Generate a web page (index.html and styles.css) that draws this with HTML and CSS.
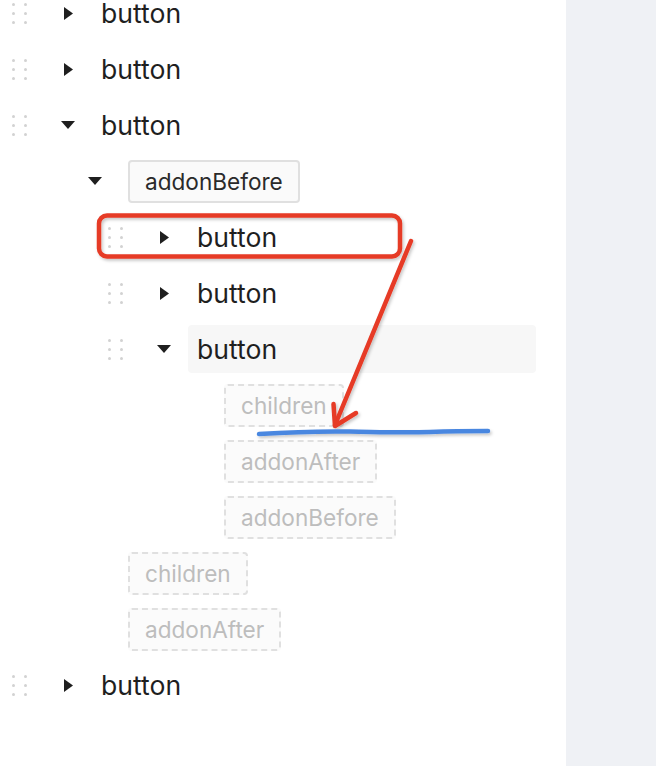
FILE: index.html
```html
<!DOCTYPE html>
<html>
<head>
<meta charset="utf-8">
<link rel="stylesheet" href="styles.css">
</head>
<body>
<div class="app">
  <div class="tree">
    <div class="node">
      <div class="row"><span class="handle"><i></i><i></i><i></i><i></i><i></i><i></i></span><span class="caret"><svg width="9" height="13" viewBox="0 0 9 13"><polygon points="0,0 9,6.5 0,13"/></svg></span><span class="label">button</span></div>
    </div>
    <div class="node">
      <div class="row"><span class="handle"><i></i><i></i><i></i><i></i><i></i><i></i></span><span class="caret"><svg width="9" height="13" viewBox="0 0 9 13"><polygon points="0,0 9,6.5 0,13"/></svg></span><span class="label">button</span></div>
    </div>
    <div class="node">
      <div class="row"><span class="handle"><i></i><i></i><i></i><i></i><i></i><i></i></span><span class="caret"><svg width="14" height="8" viewBox="0 0 14 8"><polygon points="0,0 14,0 7,8"/></svg></span><span class="label">button</span></div>
      <div class="slot">
        <div class="slot-row"><span class="caret"><svg width="14" height="8" viewBox="0 0 14 8"><polygon points="0,0 14,0 7,8"/></svg></span><span class="tag">addonBefore</span></div>
        <div class="slot-children">
          <div class="node">
            <div class="row"><span class="handle"><i></i><i></i><i></i><i></i><i></i><i></i></span><span class="caret"><svg width="9" height="13" viewBox="0 0 9 13"><polygon points="0,0 9,6.5 0,13"/></svg></span><span class="label">button</span></div>
          </div>
          <div class="node">
            <div class="row"><span class="handle"><i></i><i></i><i></i><i></i><i></i><i></i></span><span class="caret"><svg width="9" height="13" viewBox="0 0 9 13"><polygon points="0,0 9,6.5 0,13"/></svg></span><span class="label">button</span></div>
          </div>
          <div class="node">
            <div class="row"><span class="handle"><i></i><i></i><i></i><i></i><i></i><i></i></span><span class="caret"><svg width="14" height="8" viewBox="0 0 14 8"><polygon points="0,0 14,0 7,8"/></svg></span><span class="label hover">button</span></div>
            <div class="slot"><div class="slot-row"><span class="caret"></span><span class="tag empty">children</span></div></div>
            <div class="slot"><div class="slot-row"><span class="caret"></span><span class="tag empty">addonAfter</span></div></div>
            <div class="slot"><div class="slot-row"><span class="caret"></span><span class="tag empty">addonBefore</span></div></div>
          </div>
        </div>
      </div>
      <div class="slot"><div class="slot-row"><span class="caret"></span><span class="tag empty">children</span></div></div>
      <div class="slot"><div class="slot-row"><span class="caret"></span><span class="tag empty">addonAfter</span></div></div>
    </div>
    <div class="node">
      <div class="row"><span class="handle"><i></i><i></i><i></i><i></i><i></i><i></i></span><span class="caret"><svg width="9" height="13" viewBox="0 0 9 13"><polygon points="0,0 9,6.5 0,13"/></svg></span><span class="label">button</span></div>
    </div>
  </div>
  <div class="side"></div>
  <svg class="marks" width="656" height="766" viewBox="0 0 656 766">
    <defs>
      <filter id="sh" x="-10%" y="-10%" width="120%" height="120%">
        <feDropShadow dx="1.5" dy="2" stdDeviation="1.5" flood-color="#000" flood-opacity="0.22"/>
      </filter>
    </defs>
    <g filter="url(#sh)" fill="none" stroke-linecap="round" stroke-linejoin="round">
      <rect x="99" y="215.5" width="301" height="41" rx="8" stroke="#e63a26" stroke-width="4.5"/>
      <path d="M411 241 L335 425" stroke="#e63a26" stroke-width="4.5"/>
      <path d="M333.5 404 L335 426 L356 413" stroke="#e63a26" stroke-width="4.5"/>
      <path d="M259 434 C 290 432, 320 431, 350 431.5 C 380 432, 400 433, 430 432 C 455 431, 475 431, 488 431" stroke="#4a87e0" stroke-width="4.5"/>
    </g>
  </svg>
</div>
</body>
</html>
```
FILE: styles.css
```css
html, body {
  margin: 0;
  padding: 0;
  background: #ffffff;
}
.app {
  position: relative;
  display: flex;
  width: 656px;
  height: 766px;
  overflow: hidden;
  font-family: Inter, "Noto Sans", sans-serif;
}
.tree {
  width: 566px;
  flex: none;
  margin-top: -15px;
  background: #ffffff;
}
.side {
  flex: 1;
  background: #eff1f5;
}
.row {
  display: flex;
  align-items: center;
  height: 56px;
  padding-left: 12px;
}
.handle {
  display: grid;
  grid-template-columns: 3px 3px;
  column-gap: 9px;
  row-gap: 6px;
  width: 15px;
  flex: none;
}
.handle i {
  display: block;
  width: 3px;
  height: 3px;
  border-radius: 50%;
  background: #d2d2d2;
}
.caret {
  display: flex;
  align-items: center;
  justify-content: center;
  width: 20px;
  height: 20px;
  flex: none;
}
.caret svg {
  display: block;
  fill: #1f1f1f;
}
.row .caret {
  margin-left: 31px;
}
.label {
  flex: 1;
  height: 48px;
  line-height: 48px;
  margin-left: 14px;
  margin-right: 30px;
  padding-left: 9px;
  border-radius: 4px;
  font-size: 26.6px;
  color: #1f1f1f;
}
.label.hover {
  background: #f7f7f7;
}
.slot-row {
  display: flex;
  align-items: center;
  height: 56px;
  padding-left: 85px;
}
.tag {
  margin-left: 23px;
  height: 43px;
  line-height: 39px;
  box-sizing: border-box;
  padding: 0 15px;
  border: 2px solid #e0e0e0;
  border-radius: 4px;
  background: #fafafa;
  font-size: 22.6px;
  color: #2a2a2a;
}
.tag.empty {
  border: 2px dashed #e0e0e0;
  color: #bdbdbd;
  background: #fbfbfb;
}
.slot-children {
  padding-left: 96px;
}
.marks {
  position: absolute;
  left: 0;
  top: 0;
  pointer-events: none;
}
```
